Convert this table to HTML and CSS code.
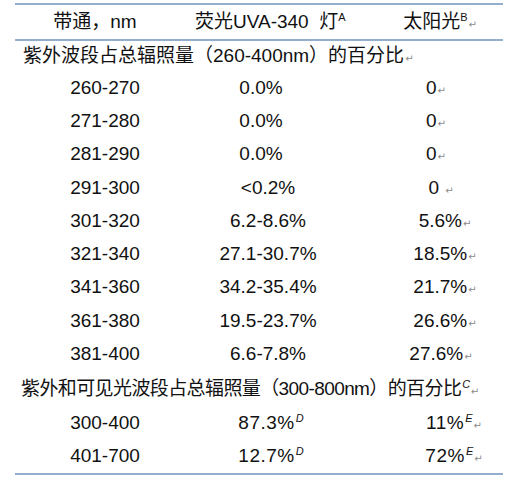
FILE: index.html
```html
<!DOCTYPE html>
<html lang="zh">
<head>
<meta charset="utf-8">
<link rel="stylesheet" href="styles.css">
</head>
<body>
<table class="spec">
  <colgroup>
    <col class="k1">
    <col class="k2">
    <col class="k3">
  </colgroup>
  <thead>
    <tr class="head">
      <th class="c1 h1">带通，nm</th>
      <th class="c2">荧光UVA-340&nbsp; 灯<sup class="sup">A</sup></th>
      <th class="c3">太阳光<sup class="sup">B</sup><span class="ret">↵</span></th>
    </tr>
  </thead>
  <tbody>
    <tr class="title t1"><td colspan="3">紫外波段占总辐照量（260-400nm）的百分比<span class="ret">↵</span></td></tr>
    <tr class="row"><td class="c1">260-270</td><td class="c2 zz">0.0%</td><td class="c3 z">0<span class="ret">↵</span></td></tr>
    <tr class="row"><td class="c1">271-280</td><td class="c2 zz">0.0%</td><td class="c3 z">0<span class="ret">↵</span></td></tr>
    <tr class="row"><td class="c1">281-290</td><td class="c2 zz">0.0%</td><td class="c3 z">0<span class="ret">↵</span></td></tr>
    <tr class="row"><td class="c1">291-300</td><td class="c2">&lt;0.2%</td><td class="c3 z4">0 <span class="ret">↵</span></td></tr>
    <tr class="row"><td class="c1">301-320</td><td class="c2">6.2-8.6%</td><td class="c3">5.6%<span class="ret">↵</span></td></tr>
    <tr class="row"><td class="c1">321-340</td><td class="c2">27.1-30.7%</td><td class="c3">18.5%<span class="ret">↵</span></td></tr>
    <tr class="row"><td class="c1">341-360</td><td class="c2">34.2-35.4%</td><td class="c3">21.7%<span class="ret">↵</span></td></tr>
    <tr class="row"><td class="c1">361-380</td><td class="c2">19.5-23.7%</td><td class="c3">26.6%<span class="ret">↵</span></td></tr>
    <tr class="row"><td class="c1">381-400</td><td class="c2">6.6-7.8%</td><td class="c3 s27">27.6%<span class="ret">↵</span></td></tr>
    <tr class="title t2"><td colspan="3">紫外和可见光波段占总辐照量（300-800nm）的百分比<sup class="isup">C</sup><span class="ret">↵</span></td></tr>
    <tr class="row r2"><td class="c1">300-400</td><td class="c2 pl"><span class="sp">87.3%</span><sup class="isup">D</sup></td><td class="c3 pr"><span class="sp">11%</span><sup class="isup">E</sup><span class="ret">↵</span></td></tr>
    <tr class="row r2 last"><td class="c1">401-700</td><td class="c2 pl"><span class="sp">12.7%</span><sup class="isup">D</sup></td><td class="c3 pr"><span class="sp">72%</span><sup class="isup">E</sup><span class="ret">↵</span></td></tr>
  </tbody>
</table>
</body>
</html>
```

FILE: styles.css
```css
html, body {
  margin: 0;
  padding: 0;
  background: #ffffff;
}
body {
  padding: 3px 0 0 15px;
  font-family: "Liberation Sans", "Noto Sans CJK SC", Arial, sans-serif;
  font-size: 19px;
  color: #111;
}
.spec {
  border-collapse: collapse;
  width: 488px;
  table-layout: fixed;
}
.k1 { width: 180px; }
.k2 { width: 146px; }
.k3 { width: 162px; }
.spec th, .spec td {
  padding: 0;
  font-weight: normal;
  white-space: nowrap;
  vertical-align: middle;
  line-height: 22px;
  text-align: center;
}
.spec .c3 { padding-left: 46px; }
.head {
  height: 36px;
  border-top: 2px solid #93aece;
  border-bottom: 2px solid #93aece;
}
.spec .h1 { padding-right: 20px; }
.spec .head .c3 { padding-left: 36px; }
.spec .title td {
  text-align: left;
}
.t1 { height: 31px; }
.spec .t1 td { padding-left: 8px; }
.t2 { height: 36px; }
.spec .t2 td { padding-left: 6px; letter-spacing: -0.6px; }
.row { height: 33.3px; }
.r2 { height: 33.5px; }
.last { border-bottom: 2px solid #93aece; }
.spec .zz { padding-right: 14px; }
.spec .z { padding-left: 28px; }
.spec .z4 { padding-left: 38px; }
.spec .s27 { padding-left: 38px; }
.sp { letter-spacing: 0.5px; }
.spec .pl { padding-left: 6px; }
.spec .pr { padding-left: 64px; }
.sup {
  font-size: 11px;
  vertical-align: 7px;
  line-height: 0;
}
.isup {
  font-size: 11px;
  font-style: italic;
  vertical-align: 7px;
  line-height: 0;
  margin-left: 1px;
}
.ret {
  font-family: "DejaVu Sans", sans-serif;
  font-size: 10px;
  color: #8a8a8a;
  line-height: 0;
  margin-left: 1px;
}
```
